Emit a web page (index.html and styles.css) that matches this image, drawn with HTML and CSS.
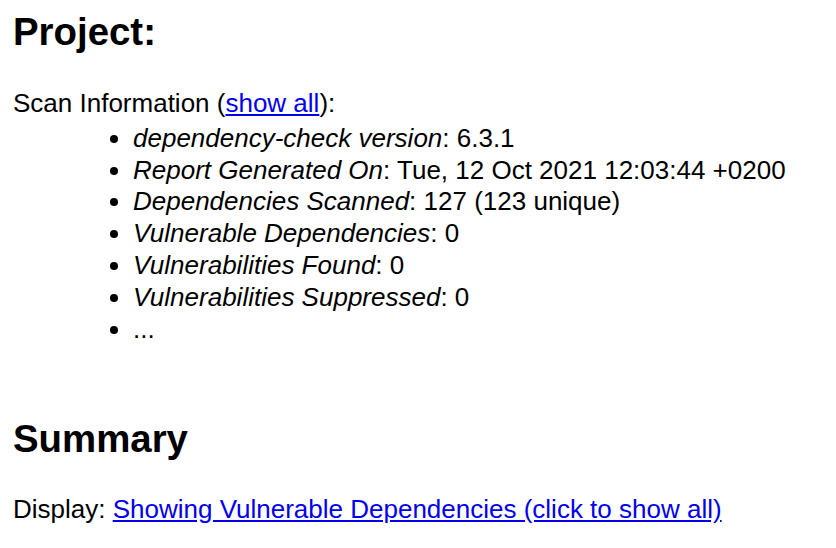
FILE: index.html
```html
<!DOCTYPE html>
<html lang="en">
<head>
    <meta charset="UTF-8">
    <meta name="viewport" content="width=device-width, initial-scale=1.0">
    <title>Dependency-Check Report</title>
    <link rel="stylesheet" href="styles.css">
</head>
<body>

<h2 class="section-title">Project:</h2>
<div class="scan-info">
    Scan Information (<a href="#" class="toggle-link">show all</a>):
    <ul class="scan-list">
        <li><i>dependency-check version</i>: 6.3.1</li>
        <li><i>Report Generated On</i>: Tue, 12 Oct 2021 12:03:44 +0200</li>
        <li><i>Dependencies Scanned</i>: 127 (123 unique)</li>
        <li><i>Vulnerable Dependencies</i>: 0</li>
        <li><i>Vulnerabilities Found</i>: 0</li>
        <li><i>Vulnerabilities Suppressed</i>: 0</li>
        <li>...</li>
    </ul>
</div>

<h2 class="section-title summary-title">Summary</h2>
<div class="display-row">
    Display: <a href="#" class="toggle-link">Showing Vulnerable Dependencies (click to show all)</a>
</div>

</body>
</html>
```

FILE: styles.css
```css
body {
    margin: 10px 13px;
    font-family: "Liberation Sans", Arial, sans-serif;
    font-size: 26px;
    line-height: 31.8px;
    color: #000;
    background: #fff;
}

.section-title {
    margin: 0;
    font-size: 38.4px;
    line-height: 44px;
    font-weight: bold;
}

.scan-info {
    margin-top: 34px;
}

.toggle-link {
    color: #0000ee;
    text-decoration: underline;
}

.scan-list {
    margin: 3px 0 0;
    padding-left: 120px;
    list-style: disc;
}

.summary-title {
    margin-top: 72px;
}

.display-row {
    margin-top: 33px;
}
```
